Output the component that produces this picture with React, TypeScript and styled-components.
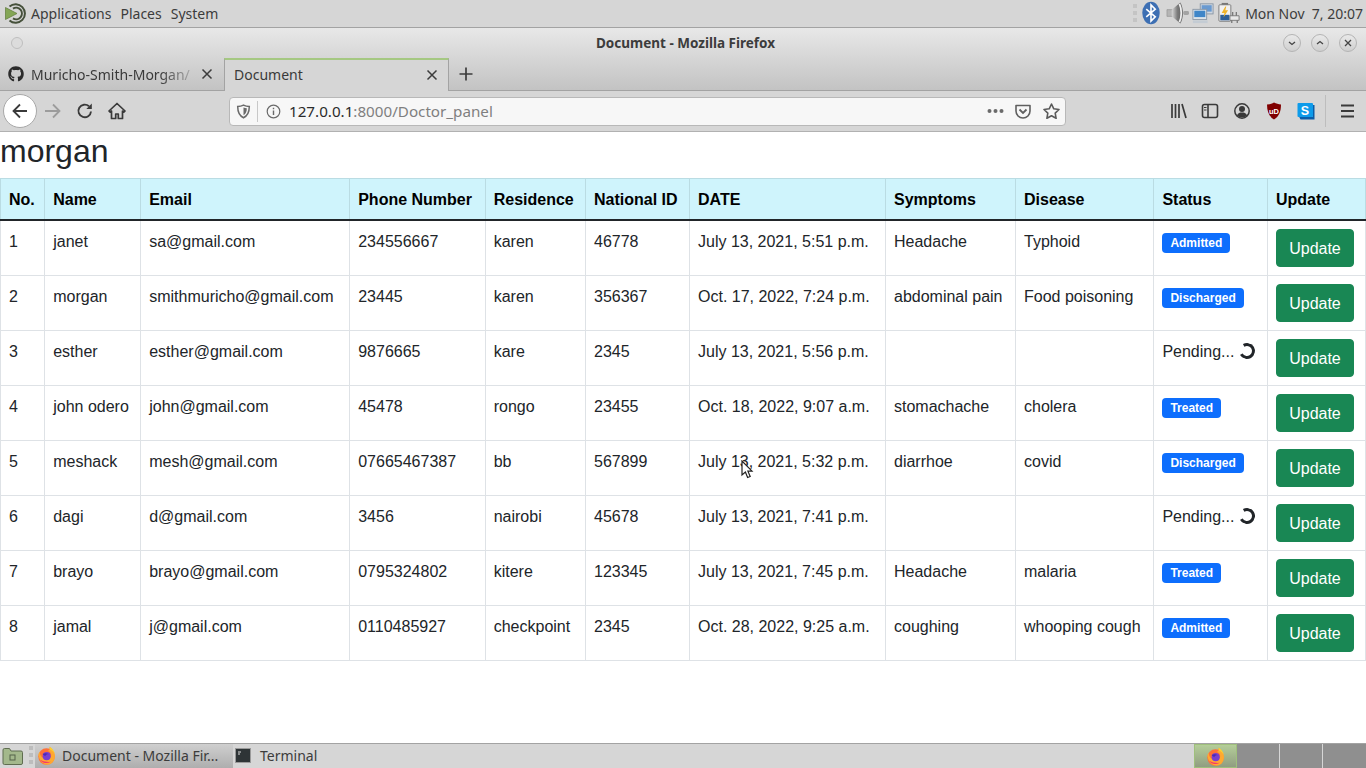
import React from "react";
import styled, { createGlobalStyle } from "styled-components";
import { FaGithub } from "react-icons/fa";

const Global = createGlobalStyle`
  html, body { margin: 0; padding: 0; background: #fff; overflow: hidden; }
  * { box-sizing: border-box; }
`;

const Screen = styled.div`
  position: relative;
  width: 1366px;
  height: 768px;
  display: flex;
  flex-direction: column;
  overflow: hidden;
  font-family: "Liberation Sans", Arial, sans-serif;
  color: #212529;
`;

/* ---------- desktop panel ---------- */
const TopPanel = styled.header`
  height: 28px;
  flex: none;
  display: flex;
  align-items: center;
  background: #d6d6d6;
  border-bottom: 1px solid #a3a3a3;
  padding: 0 0 1px 5px;
  font-family: "Noto Sans", sans-serif;
  font-size: 14px;
  color: #3c3c3c;
`;
const PanelMenu = styled.span`
  margin-right: 9px;
`;
const MintLogo = styled.svg`
  width: 21px;
  height: 21px;
  margin-right: 5px;
`;
const Spacer = styled.div`
  flex: 1;
`;
const Grip = styled.div`
  width: 4px;
  height: 19px;
  margin-right: 5px;
  background: repeating-linear-gradient(#c4c4c4 0 4px, transparent 4px 7px);
`;
const TrayIcon = styled.svg<{ $w: number; $mr: number }>`
  width: ${(p) => p.$w}px;
  height: 24px;
  margin-right: ${(p) => p.$mr}px;
  flex: none;
`;
const Clock = styled.span`
  margin-left: 5px;
  margin-right: 3px;
  white-space: pre;
`;

/* ---------- firefox chrome ---------- */
const Chrome = styled.div`
  flex: none;
  background: linear-gradient(#e8e8e8, #c3c3c3 62px);
  height: 63px;
  display: flex;
  flex-direction: column;
`;
const TitleBar = styled.div`
  height: 30px;
  display: grid;
  grid-template-columns: 1fr auto 1fr;
  align-items: center;
  padding: 0 9px 0 11px;
  font-family: "Noto Sans", sans-serif;
  font-size: 13.5px;
  font-weight: 700;
  color: #3c3c3c;
`;
const Title = styled.span`
  margin-left: 3px;
`;
const CloseDot = styled.span`
  width: 12px;
  height: 12px;
  border-radius: 50%;
  background: #dcdcdc;
  border: 1px solid #bfbfbf;
`;
const WinButtons = styled.div`
  justify-self: end;
  display: flex;
  gap: 10px;
`;
const WinButton = styled.span`
  width: 18px;
  height: 18px;
  border-radius: 50%;
  border: 1px solid #b4b4b4;
  background: linear-gradient(#e9e9e9, #cfcfcf);
  display: flex;
  align-items: center;
  justify-content: center;
  svg { width: 10px; height: 10px; }
`;
const TabStrip = styled.div`
  height: 33px;
  display: flex;
  align-items: stretch;
  border-bottom: 1px solid #a3a3a3;
  font-family: "Noto Sans", sans-serif;
  font-size: 14px;
  color: #3a3a3a;
`;
const Tab = styled.div<{ $active?: boolean }>`
  width: ${(p) => (p.$active ? "225px" : "224px")};
  display: flex;
  align-items: center;
  padding: ${(p) => (p.$active ? "0 10px 2px 9px" : "0 11px 0 8px")};
  ${(p) =>
    p.$active
      ? `background: #d6d6d6;
         border: 1px solid #a3a3a3;
         border-top: 2px solid #a5c882;
         border-bottom: none;
         margin-bottom: -1px;`
      : ""}
`;
const TabLabel = styled.span<{ $fade?: boolean }>`
  flex: 1;
  white-space: nowrap;
  overflow: hidden;
  margin-left: ${(p) => (p.$fade ? "7px" : "0")};
  ${(p) =>
    p.$fade
      ? `-webkit-mask-image: linear-gradient(to right, #000 78%, rgba(0,0,0,.3) 96%);`
      : ""}
`;
const TabClose = styled.svg`
  width: 12px;
  height: 12px;
  flex: none;
`;
const NewTab = styled.svg`
  width: 16px;
  height: 16px;
  align-self: center;
  margin-left: 9px;
`;
const Toolbar = styled.div`
  flex: none;
  height: 41px;
  background: #d6d6d6;
  border-bottom: 1px solid #b1b1b1;
  display: flex;
  align-items: center;
  padding-left: 3px;
`;
const BackCircle = styled.span`
  width: 34px;
  height: 34px;
  border-radius: 50%;
  background: #fff;
  border: 1px solid #a8a8a8;
  display: flex;
  align-items: center;
  justify-content: center;
  margin-right: 7px;
`;
const ToolSvg = styled.svg<{ $ml?: number }>`
  width: 18px;
  height: 18px;
  flex: none;
  margin-left: ${(p) => p.$ml ?? 0}px;
`;
const UrlBar = styled.div`
  width: 837px;
  height: 29px;
  margin-left: 103px;
  background: #f7f7f7;
  border: 1px solid #b8b8b8;
  border-radius: 4px;
  display: flex;
  align-items: center;
  padding: 0 5px 0 6px;
  font-family: "Noto Sans", sans-serif;
  font-size: 15.2px;
  color: #7f7f7f;
`;
const UrlDivider = styled.span`
  width: 1px;
  height: 21px;
  background: #c8c8c8;
  margin: 0 8px 0 6px;
`;
const UrlHost = styled.span`
  color: #2b2b2b;
  margin-left: 8px;
`;
const RightDivider = styled.span`
  width: 1px;
  height: 32px;
  background: #bdbdbd;
  margin-left: 10px;
`;

/* ---------- page ---------- */
const Page = styled.main`
  flex: 1;
  min-height: 0;
  background: #fff;
`;
const Heading = styled.h1`
  margin: 0 0 8px;
  font-size: 32px;
  line-height: 38.4px;
  font-weight: 400;
  color: #212529;
`;
const Table = styled.table`
  width: 1365.5px;
  table-layout: fixed;
  border-collapse: collapse;
  font-size: 16px;
  line-height: 24px;
`;
const HeadCell = styled.th`
  background: #cff4fc;
  color: #000;
  font-weight: 700;
  text-align: left;
  padding: 9px 8px 7px;
  border: 1px solid #badce3;
  border-bottom: 2px solid #212529;
  white-space: nowrap;
`;
const Cell = styled.td`
  padding: 9px 8px 7px;
  border: 1px solid #dee2e6;
  vertical-align: top;
  color: #212529;
  white-space: nowrap;
`;
const Badge = styled.span`
  display: inline-block;
  background: #0d6efd;
  color: #fff;
  font-size: 12px;
  line-height: 12px;
  font-weight: 700;
  padding: 4px 8px;
  border-radius: 4px;
  vertical-align: baseline;
`;
const Spinner = styled.span`
  display: inline-block;
  width: 16px;
  height: 16px;
  margin-left: 5px;
  border: 3.2px solid #212529;
  border-right-color: transparent;
  border-radius: 50%;
  transform: rotate(195deg);
  vertical-align: -2px;
`;
const UpdateButton = styled.button`
  display: block;
  width: 78px;
  height: 38px;
  margin: -1px 0 1px;
  background: #198754;
  border: 1px solid #198754;
  border-radius: 4px;
  color: #fff;
  font-family: inherit;
  font-size: 16px;
  line-height: 24px;
  padding: 7px 12px 5px;
`;

/* ---------- task bar ---------- */
const TaskBar = styled.footer`
  flex: none;
  height: 25px;
  background: #d6d6d6;
  border-top: 1px solid #a3a3a3;
  display: flex;
  align-items: stretch;
  font-family: "Noto Sans", sans-serif;
  font-size: 14px;
  color: #3c3c3c;
`;
const FolderIcon = styled.svg`
  width: 21px;
  height: 20px;
  margin: 2px 5px 0 2px;
  flex: none;
`;
const TaskGrip = styled.div`
  width: 4px;
  height: 19px;
  margin: 2px 2px 0 1px;
  background: repeating-linear-gradient(#bdbdbd 0 4px, transparent 4px 7px);
`;
const TaskItem = styled.div<{ $active?: boolean; $w: number; $gap: number }>`
  width: ${(p) => p.$w}px;
  display: flex;
  align-items: center;
  gap: ${(p) => p.$gap}px;
  padding: 0 0 2px 2px;
  white-space: nowrap;
  background: ${(p) => (p.$active ? "linear-gradient(#cfcfcf, #aeaeae)" : "transparent")};
`;
const Workspace = styled.div<{ $active?: boolean }>`
  width: 43px;
  display: flex;
  align-items: center;
  justify-content: center;
  border-right: 1px solid #d6d6d6;
  background: ${(p) => (p.$active ? "linear-gradient(#b6d09a, #8f9b80)" : "#8f8f8f")};
  ${(p) => (p.$active ? "outline: 1px solid #9fc07c; outline-offset: -1px;" : "")}
  &:last-child { border-right: none; }
`;
const Cursor = styled.svg`
  position: absolute;
  left: 741px;
  top: 460px;
  width: 13px;
  height: 20px;
`;

const Firefox = () => (
  <svg width="19" height="19" viewBox="0 0 18 18" style={{ flex: "none" }}>
    <circle cx="9" cy="10" r="7.8" fill="#ff7139" />
    <path d="M1.4 8.5C2 14 6 17.6 10 17.6c4.5 0 7-4 7-7.8 0-1.7-.4-3.3-1.2-4.6C14.8 3 13 1.5 11.8.6c.6 2.300-.4 3.600-1.600 4.100 2.700.5 3.800 3 3 5.200C12 13 7 13.600 4.300 10.200 3 8.600 2.400 7.200 2.800 5.300 2 6 1.500 7.200 1.400 8.500Z" fill="#ffa930" />
    <path d="M11.8.6c2.6 1.500 4.600 3.800 5 7-1-2.400-2.600-3.600-4.300-4.100Z" fill="#ffd02e" />
    <circle cx="9.2" cy="9.6" r="3.8" fill="#7a3fd0" />
    <path d="M5.3 7.6c1.600-1 4.200-1.200 5.800.2-1.600-.2-2.800.4-3.200 1.600-.8-.1-1.800-.7-2.600-1.800Z" fill="#4a2bb5" />
    <path d="M3 13c2 3.200 6.500 4.200 10 2-3 .3-7-.2-10-2Z" fill="#f5366e" />
  </svg>
);

type Row = [string, string, string, string, string, string, string, string, string, string];
const rows: Row[] = [
  ["1", "janet", "sa@gmail.com", "234556667", "karen", "46778", "July 13, 2021, 5:51 p.m.", "Headache", "Typhoid", "Admitted"],
  ["2", "morgan", "smithmuricho@gmail.com", "23445", "karen", "356367", "Oct. 17, 2022, 7:24 p.m.", "abdominal pain", "Food poisoning", "Discharged"],
  ["3", "esther", "esther@gmail.com", "9876665", "kare", "2345", "July 13, 2021, 5:56 p.m.", "", "", ""],
  ["4", "john odero", "john@gmail.com", "45478", "rongo", "23455", "Oct. 18, 2022, 9:07 a.m.", "stomachache", "cholera", "Treated"],
  ["5", "meshack", "mesh@gmail.com", "07665467387", "bb", "567899", "July 13, 2021, 5:32 p.m.", "diarrhoe", "covid", "Discharged"],
  ["6", "dagi", "d@gmail.com", "3456", "nairobi", "45678", "July 13, 2021, 7:41 p.m.", "", "", ""],
  ["7", "brayo", "brayo@gmail.com", "0795324802", "kitere", "123345", "July 13, 2021, 7:45 p.m.", "Headache", "malaria", "Treated"],
  ["8", "jamal", "j@gmail.com", "0110485927", "checkpoint", "2345", "Oct. 28, 2022, 9:25 a.m.", "coughing", "whooping cough", "Admitted"],
];
const heads = ["No.", "Name", "Email", "Phone Number", "Residence", "National ID", "DATE", "Symptoms", "Disease", "Status", "Update"];
const widths = [44.2, 96, 209, 135.5, 100.3, 104, 196, 130, 138.4, 113.6, 98.5];

const Column = styled.col<{ $w: number }>`
  width: ${(p) => p.$w}px;
`;

export default function App() {
  return (
    <Screen>
      <Global />
      <TopPanel>
        <MintLogo viewBox="0 0 21 21">
          <path d="M4.500 3.500A9.300 9.300 0 1 1 4.500 17.500" fill="none" stroke="#45503a" strokeWidth="2" />
          <path d="M8 5.600A5.800 5.800 0 1 1 8 15.400" fill="none" stroke="#45503a" strokeWidth="2" />
          <path d="M0.500 4.500 L12 10.500 L0.500 16.500Z" fill="#84a656" stroke="#5f7a3a" strokeWidth=".7" />
        </MintLogo>
        <PanelMenu>Applications</PanelMenu>
        <PanelMenu>Places</PanelMenu>
        <PanelMenu>System</PanelMenu>
        <Spacer />
        <Grip />
        <TrayIcon viewBox="0 0 19 24" $w={18} $mr={6}>
          <ellipse cx="9.500" cy="12" rx="9.200" ry="11.800" fill="#3d6fb3" />
          <path d="M4.500 8l9.500 8-4.500 4.500V3.500L14 8l-9.500 8" fill="none" stroke="#fff" strokeWidth="1.700" />
        </TrayIcon>
        <TrayIcon viewBox="0 0 24 24" $w={23} $mr={3}>
          <defs>
            <linearGradient id="cone" x1="0" y1="0" x2="1" y2="0">
              <stop offset="0" stopColor="#d9d9d9" />
              <stop offset=".5" stopColor="#7c7c7c" />
              <stop offset="1" stopColor="#5e5e5e" />
            </linearGradient>
          </defs>
          <path d="M1 8.500h6v7H1z" fill="#b5b5b5" stroke="#8a8a8a" strokeWidth=".6" />
          <path d="M6 8.500l9-7.500c3.500 6 3.500 16 0 22l-9-7.500Z" fill="url(#cone)" />
          <path d="M14 2.500c2.600 5.500 2.600 13.500 0 19" stroke="#efefef" strokeWidth="1.800" fill="none" />
          <rect x="18" y="10" width="6" height="4" rx="1.500" fill="#a3a3a3" />
        </TrayIcon>
        <TrayIcon viewBox="0 0 24 24" $w={22} $mr={4}>
          <rect x="9" y="2" width="14" height="11" fill="#cfd8e2" stroke="#8a97a5" />
          <rect x="10.500" y="3.500" width="11" height="7" fill="#6a9ad0" />
          <rect x="1" y="8" width="15" height="11" fill="#dfe6ec" stroke="#8a97a5" />
          <rect x="2.500" y="9.500" width="12" height="7" fill="#3f86c8" />
          <rect x="1" y="20" width="16" height="3" fill="#c4ccd4" />
        </TrayIcon>
        <TrayIcon viewBox="0 0 24 24" $w={22} $mr={0}>
          <rect x="1" y="3" width="13" height="18" rx="1" fill="#f1f1f1" stroke="#777" />
          <rect x="4" y="1" width="7" height="2" fill="#777" />
          <rect x="2.500" y="14" width="10" height="6" fill="#2d5f98" />
          <path d="M8 5L4 12h3l-1 5 5-8H8l1-4Z" fill="#f0b429" />
          <path d="M13 15h10v5h-10z" fill="#e8e8e8" stroke="#777" />
          <path d="M16 11v4M20 11v4M15 20v3M21 20v3" stroke="#777" strokeWidth="1.400" />
        </TrayIcon>
        <Clock>Mon Nov  7, 20:07</Clock>
      </TopPanel>

      <Chrome>
        <TitleBar>
          <CloseDot />
          <Title>Document - Mozilla Firefox</Title>
          <WinButtons>
            <WinButton>
              <svg viewBox="0 0 10 10"><path d="M2 4l3 2.500L8 4" fill="none" stroke="#444" strokeWidth="1.300" /></svg>
            </WinButton>
            <WinButton>
              <svg viewBox="0 0 10 10"><path d="M2 6l3-2.500L8 6" fill="none" stroke="#444" strokeWidth="1.300" /></svg>
            </WinButton>
            <WinButton>
              <svg viewBox="0 0 10 10"><path d="M2 2l6 6M8 2l-6 6" fill="none" stroke="#444" strokeWidth="1.300" /></svg>
            </WinButton>
          </WinButtons>
        </TitleBar>
        <TabStrip>
          <Tab>
            <FaGithub size={16} color="#2b2b2b" style={{ flex: "none" }} />
            <TabLabel $fade>Muricho-Smith-Morgan/</TabLabel>
            <TabClose viewBox="0 0 12 12" style={{ marginLeft: 6 }}>
              <path d="M1.500 1.500l9 9M10.500 1.500l-9 9" stroke="#3c3c3c" strokeWidth="1.500" />
            </TabClose>
          </Tab>
          <Tab $active>
            <TabLabel>Document</TabLabel>
            <TabClose viewBox="0 0 12 12">
              <path d="M1.500 1.500l9 9M10.500 1.500l-9 9" stroke="#3c3c3c" strokeWidth="1.500" />
            </TabClose>
          </Tab>
          <NewTab viewBox="0 0 16 16">
            <path d="M8 1.500v13M1.500 8h13" stroke="#3c3c3c" strokeWidth="1.700" />
          </NewTab>
        </TabStrip>
      </Chrome>

      <Toolbar>
        <BackCircle>
          <svg width="18" height="18" viewBox="0 0 18 18">
            <path d="M16 9H2.500M9 2.500L2.500 9 9 15.500" fill="none" stroke="#3a3a3a" strokeWidth="1.800" />
          </svg>
        </BackCircle>
        <ToolSvg viewBox="0 0 18 18">
          <path d="M1 9h14M9 2.500L15.500 9 9 15.500" fill="none" stroke="#9c9c9c" strokeWidth="1.800" />
        </ToolSvg>
        <ToolSvg viewBox="0 0 18 18" $ml={14}>
          <path d="M15 9.500a6.300 6.300 0 1 1-2-5.200" fill="none" stroke="#3a3a3a" strokeWidth="1.900" />
          <path d="M15.800 1.500v5.500h-5.500Z" fill="#3a3a3a" />
        </ToolSvg>
        <ToolSvg viewBox="0 0 18 18" $ml={14}>
          <path d="M9 1.500L1 9l1.200 1.200L3.500 9v7.500h4.200v-4.500h2.600v4.500h4.200V9l1.300 1.200L17 9Z" fill="none" stroke="#3a3a3a" strokeWidth="1.700" strokeLinejoin="round" />
        </ToolSvg>
        <UrlBar>
          <svg width="15" height="15" viewBox="0 0 15 15" style={{ flex: "none" }}>
            <path d="M7.500 1.200c2 1 3.800 1.300 5.800 1.300 0 5-1 9-5.800 11.300C2.700 11.500 1.700 7.500 1.700 2.500c2 0 3.800-.3 5.800-1.300Z" fill="none" stroke="#6a6a6a" strokeWidth="1.500" />
            <path d="M7.500 3.500c1.200.5 2 .7 3.300.8 0 3-.7 5.500-3.300 7Z" fill="#6a6a6a" />
          </svg>
          <UrlDivider />
          <svg width="15" height="15" viewBox="0 0 15 15" style={{ flex: "none" }}>
            <circle cx="7.500" cy="7.500" r="6.300" fill="none" stroke="#6a6a6a" strokeWidth="1.200" />
            <path d="M7.500 6.500v4.500M7.500 3.800v1.400" stroke="#6a6a6a" strokeWidth="1.400" />
          </svg>
          <UrlHost>127.0.0.1</UrlHost>
          <span>:8000/Doctor_panel</span>
          <Spacer />
          <svg width="17" height="6" viewBox="0 0 17 6" style={{ flex: "none" }}>
            <circle cx="2.500" cy="3" r="2" fill="#6a6a6a" />
            <circle cx="8.500" cy="3" r="2" fill="#6a6a6a" />
            <circle cx="14.500" cy="3" r="2" fill="#6a6a6a" />
          </svg>
          <svg width="16" height="15" viewBox="0 0 16 15" style={{ flex: "none", marginLeft: 11 }}>
            <path d="M1 1.500h14v5.500a7 7 0 0 1-14 0Z" fill="none" stroke="#5f5f5f" strokeWidth="1.600" strokeLinejoin="round" />
            <path d="M4.500 5.500L8 9l3.500-3.500" fill="none" stroke="#5f5f5f" strokeWidth="1.800" />
          </svg>
          <svg width="17" height="16" viewBox="0 0 17 16" style={{ flex: "none", marginLeft: 12 }}>
            <path d="M8.500 1l2.300 4.800 5.200.7-3.800 3.600.9 5.200-4.600-2.500-4.600 2.500.9-5.200L1 6.500l5.200-.7Z" fill="none" stroke="#5a5a5a" strokeWidth="1.600" strokeLinejoin="round" />
          </svg>
        </UrlBar>
        <ToolSvg viewBox="0 0 18 18" $ml={104}>
          <path d="M2 2v14M5.500 2v14M9 2v14M12 2l4 14" fill="none" stroke="#3a3a3a" strokeWidth="1.700" />
        </ToolSvg>
        <ToolSvg viewBox="0 0 18 18" $ml={13}>
          <rect x="1.500" y="2.500" width="15" height="13" rx="2" fill="none" stroke="#3a3a3a" strokeWidth="1.600" />
          <path d="M7 2.500v13" stroke="#3a3a3a" strokeWidth="1.600" />
          <path d="M3 5.500h2.500M3 8h2.500" stroke="#3a3a3a" strokeWidth="1.200" />
        </ToolSvg>
        <ToolSvg viewBox="0 0 18 18" $ml={14}>
          <circle cx="9" cy="9" r="7.200" fill="none" stroke="#3a3a3a" strokeWidth="1.500" />
          <circle cx="9" cy="7" r="3" fill="#3a3a3a" />
          <path d="M3.800 13.500c1.200-2.500 3-3 5.200-3s4 .5 5.200 3c-3 2.500-7.400 2.500-10.400 0Z" fill="#3a3a3a" />
        </ToolSvg>
        <ToolSvg viewBox="0 0 18 18" $ml={14}>
          <path d="M9 .5c2.200 1.200 4.500 1.800 7 2 0 7-2 12-7 15-5-3-7-8-7-15 2.500-.2 4.800-.8 7-2Z" fill="#800000" />
          <text x="9" y="11.500" textAnchor="middle" fontSize="7.500" fontWeight="700" fontFamily="Liberation Sans" fill="#fff">uD</text>
        </ToolSvg>
        <ToolSvg viewBox="0 0 18 18" $ml={14}>
          <path d="M2 14.500h14V3h1.500v14.500H3.500Z" fill="#0a5da8" />
          <rect x="0.500" y="1" width="15.500" height="14" rx="1" fill="#0d9bea" />
          <text x="8" y="12.500" textAnchor="middle" fontSize="12.500" fontWeight="700" fontFamily="Liberation Sans" fill="#fff">S</text>
        </ToolSvg>
        <RightDivider />
        <ToolSvg viewBox="0 0 18 18" $ml={13}>
          <path d="M2 3.500h13M2 9h13M2 14.500h13" stroke="#3a3a3a" strokeWidth="2" />
        </ToolSvg>
      </Toolbar>

      <Page>
        <Heading>morgan</Heading>
        <Table>
          <colgroup>
            {widths.map((w, i) => (
              <Column key={i} $w={w} />
            ))}
          </colgroup>
          <thead>
            <tr>
              {heads.map((h) => (
                <HeadCell key={h}>{h}</HeadCell>
              ))}
            </tr>
          </thead>
          <tbody>
            {rows.map((r) => (
              <tr key={r[0]}>
                {r.slice(0, 9).map((v, i) => (
                  <Cell key={i}>{v}</Cell>
                ))}
                <Cell>
                  {r[9] ? (
                    <Badge>{r[9]}</Badge>
                  ) : (
                    <>
                      Pending...
                      <Spinner />
                    </>
                  )}
                </Cell>
                <Cell>
                  <UpdateButton>Update</UpdateButton>
                </Cell>
              </tr>
            ))}
          </tbody>
        </Table>
      </Page>

      <TaskBar>
        <FolderIcon viewBox="0 0 21 20">
          <path d="M1 4a1.500 1.500 0 0 1 1.500-1.500h5L9 5h10a1.500 1.500 0 0 1 1.500 1.500V17a1.500 1.500 0 0 1-1.500 1.500H2.500A1.500 1.500 0 0 1 1 17Z" fill="#a3b88c" stroke="#5f6d50" />
          <rect x="8" y="9" width="5" height="5" fill="none" stroke="#55624a" />
        </FolderIcon>
        <TaskGrip />
        <TaskItem $active $w={198} $gap={6}>
          <Firefox />
          <span>Document - Mozilla Fir...</span>
        </TaskItem>
        <TaskItem $w={300} $gap={9}>
          <svg width="16" height="15" viewBox="0 0 16 15" style={{ flex: "none" }}>
            <rect x=".5" y=".5" width="15" height="14" fill="#2e3436" stroke="#9a9a9a" />
            <path d="M3 4h3M3 6h2" stroke="#ddd" />
          </svg>
          <span>Terminal</span>
        </TaskItem>
        <Spacer />
        <Workspace $active>
          <Firefox />
        </Workspace>
        <Workspace />
        <Workspace />
        <Workspace />
      </TaskBar>

      <Cursor viewBox="0 0 13 20">
        <path d="M1 1v14l3.400-3 2.200 5.500 2.600-1-2.300-5.300H11Z" fill="#fff" stroke="#222" strokeWidth="1.200" />
      </Cursor>
    </Screen>
  );
}
